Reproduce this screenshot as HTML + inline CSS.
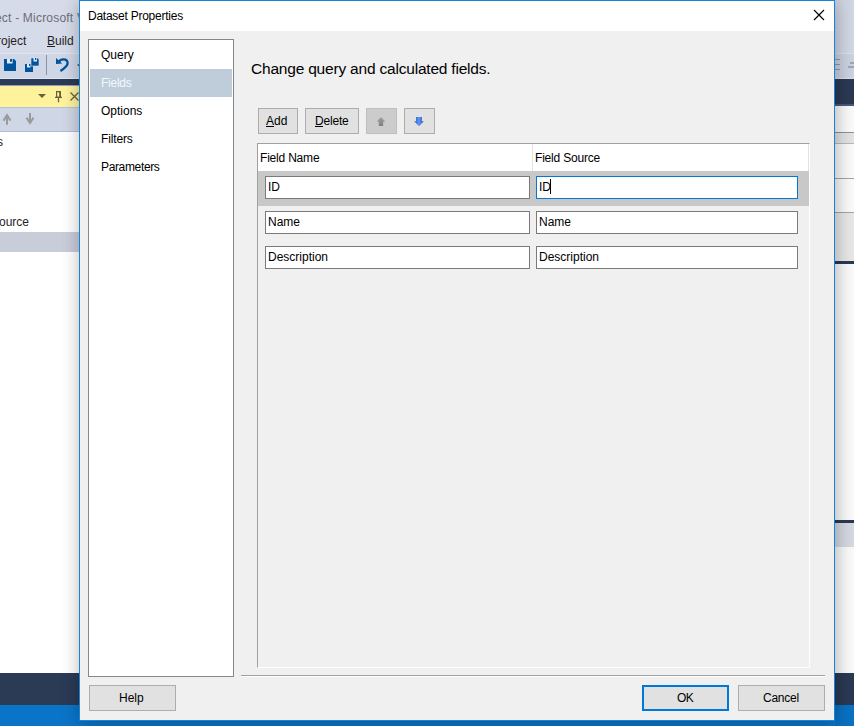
<!DOCTYPE html>
<html><head><meta charset="utf-8">
<style>
*{box-sizing:border-box;margin:0;padding:0}
html,body{width:854px;height:726px;overflow:hidden;background:#fff;font-family:"Liberation Sans",sans-serif;font-size:12px;color:#000}
div,svg{position:absolute}
.t{white-space:nowrap;line-height:12px;height:12px}
.btn{background:#e1e1e1;border:1px solid #adadad}
.tb{background:#fff;border:1px solid #7a7a7a;height:23px}
</style></head><body>
<!-- ============ IDE background ============ -->
<div style="left:0;top:0;width:854px;height:53px;background:#d6dbe9"></div>
<div style="left:0;top:53px;width:854px;height:25px;background:#cfd6e5;border-top:1px solid #e0e5f0"></div>
<div style="left:0;top:78px;width:854px;height:1px;background:#dfe4ee"></div>
<div style="left:0;top:79px;width:854px;height:6px;background:#2b3a55"></div>
<div style="left:0;top:85px;width:80px;height:1px;background:#8e9ab8"></div>
<div style="left:0;top:86px;width:80px;height:21px;background:#fff29d"></div>
<div style="left:0;top:107px;width:80px;height:1px;background:#b8c0d6"></div>
<div style="left:0;top:108px;width:80px;height:23px;background:#cfd6e5"></div>
<div style="left:0;top:131px;width:80px;height:1px;background:#b4bccf"></div>
<div style="left:0;top:232px;width:80px;height:20px;background:#c9ccd9"></div>
<div style="left:0;top:673px;width:854px;height:32px;background:#2b3a55"></div>
<div style="left:0;top:705px;width:854px;height:21px;background:#0a74c8"></div>

<!-- right strip -->
<div style="left:834px;top:79px;width:20px;height:26px;background:#2b3a55"></div>
<div style="left:834px;top:104px;width:20px;height:2px;background:#4a5a78"></div>
<div style="left:834px;top:132px;width:20px;height:1px;background:#8a96ad"></div>
<div style="left:834px;top:133px;width:20px;height:10px;background:#e8e8e8"></div>
<div style="left:834px;top:143px;width:20px;height:1px;background:#bdbdbd"></div>
<div style="left:834px;top:178px;width:20px;height:1px;background:#a8a8a8"></div>
<div style="left:834px;top:212px;width:20px;height:1px;background:#a8a8a8"></div>
<div style="left:834px;top:213px;width:20px;height:48px;background:#ececec"></div>
<div style="left:834px;top:261px;width:20px;height:3px;background:#2b3a55"></div>
<div style="left:834px;top:520px;width:20px;height:3px;background:#2b3a55"></div>
<div style="left:834px;top:523px;width:20px;height:24px;background:#d9dde6"></div>
<div style="left:835px;top:59px;width:5px;height:1px;background:#969cab"></div>
<div style="left:835px;top:64px;width:5px;height:1px;background:#969cab"></div>
<div style="left:835px;top:69px;width:5px;height:1px;background:#969cab"></div>
<div style="left:850px;top:62px;width:4px;height:2px;background:#a2a8b5"></div>
<div style="left:848px;top:66px;width:6px;height:2px;background:#a2a8b5"></div>

<!-- IDE text -->
<div class="t" style="left:-5px;top:12px;color:#6d6d78;letter-spacing:0.2px">ect - Microsoft V</div>
<div class="t" style="left:-3px;top:35px;color:#1e1e1e">roject</div>
<div class="t" style="left:47px;top:35px;color:#1e1e1e">Build</div>
<div style="left:47px;top:46px;width:8px;height:1px;background:#1e1e1e"></div>
<div class="t" style="left:-3px;top:136px;color:#1e1e1e">s</div>
<div class="t" style="left:-1px;top:216px;color:#1e1e1e">ource</div>

<!-- toolbar icons -->
<svg style="left:0;top:0" width="80" height="80" viewBox="0 0 80 80">
  <path d="M4 59H14L16 61V71H4Z" fill="#00539c"/>
  <path d="M7 59H12.6V63.5H7Z" fill="#e4e8f0"/><path d="M10 59H12V61.7H10Z" fill="#00539c"/>
  <path d="M25 64H31.5L33 65.5V72H25Z" fill="#00539c"/>
  <path d="M27 64H30.5V67.5H27Z" fill="#e4e8f0"/><path d="M29 64H30.3V66H29Z" fill="#00539c"/>
  <path d="M31 58H37.5L39 59.5V66H31Z" fill="#00539c" stroke="#d8dde8" stroke-width="0.6"/>
  <path d="M33.5 58H37V61.5H33.5Z" fill="#e4e8f0"/><path d="M35 58H36.3V60H35Z" fill="#00539c"/>
  <path d="M46.5 55V75" stroke="#8d93a3" stroke-width="1"/>
  <path d="M58.6 62.2C60.5 58.6 67.4 58.2 67.6 63.2C67.7 65.8 64 68.6 60.4 71" fill="none" stroke="#00539c" stroke-width="2.3"/>
  <path d="M56 58L56 64L62.2 63.4Z" fill="#00539c"/>
  <path d="M77 64.5h3.5l-1.75 1.8z" fill="#333"/>
</svg>
<svg style="left:0;top:85px" width="80" height="46" viewBox="0 0 80 46">
  <path d="M38 9h8l-4 4z" fill="#6e5f3c"/>
  <path d="M56.6 6.6h3.8v5.8h-3.8z" fill="none" stroke="#6e5f3c" stroke-width="1.2"/>
  <path d="M59.9 6v6.6" stroke="#6e5f3c" stroke-width="1.4"/>
  <path d="M55 12.4h7M58.5 12.4v4.8" stroke="#6e5f3c" stroke-width="1.3" fill="none"/>
  <path d="M70.5 7.5l8 8M78.5 7.5l-8 8" stroke="#6e5f3c" stroke-width="1.3"/>
  <path d="M7 39.7V30.5M3.5 35.6L7 30.2L10.5 35.6" stroke="#9a9a9a" stroke-width="2" fill="none"/>
  <path d="M30 28V38M26.5 32.6L30 38L33.5 32.6" stroke="#9a9a9a" stroke-width="2" fill="none"/>
</svg>

<div style="left:835px;top:0;width:19px;height:726px;background:linear-gradient(to right,rgba(0,0,0,0.055),rgba(0,0,0,0.025))"></div>
<!-- ============ Dialog ============ -->
<div style="left:79px;top:0;width:756px;height:721px;background:#f0f0f0;border:1px solid #1883d7;box-shadow:0 2px 16px rgba(0,0,0,0.28)"></div>
<div style="left:80px;top:1px;width:754px;height:30px;background:#fff"></div>
<div class="t" style="left:88px;top:10px;letter-spacing:-0.25px">Dataset Properties</div>
<svg style="left:813px;top:9px" width="12" height="12" viewBox="0 0 12 12"><path d="M1 1L11 11M11 1L1 11" stroke="#000" stroke-width="1.15"/></svg>

<!-- nav list -->
<div style="left:88px;top:39px;width:146px;height:638px;background:#fff;border:1px solid #828790"></div>
<div style="left:90px;top:69px;width:142px;height:28px;background:#bfcddb"></div>
<div class="t" style="left:101px;top:49px">Query</div>
<div class="t" style="left:101px;top:77px;color:#f4f7fa;letter-spacing:-0.25px">Fields</div>
<div class="t" style="left:101px;top:105px">Options</div>
<div class="t" style="left:101px;top:133px;letter-spacing:-0.15px">Filters</div>
<div class="t" style="left:101px;top:161px;letter-spacing:-0.35px">Parameters</div>

<div class="t" style="left:251px;top:61px;font-size:15.5px;line-height:16px;height:16px;letter-spacing:-0.2px">Change query and calculated fields.</div>

<!-- buttons -->
<div class="btn" style="left:258px;top:108px;width:40px;height:26px"></div>
<div class="t" style="left:266px;top:115px">Add</div>
<div style="left:266px;top:126px;width:8px;height:1px;background:#000"></div>
<div class="btn" style="left:305px;top:108px;width:54px;height:26px"></div>
<div class="t" style="left:315px;top:115px;letter-spacing:-0.2px">Delete</div>
<div style="left:315px;top:126px;width:8px;height:1px;background:#000"></div>
<div class="btn" style="left:366px;top:108px;width:31px;height:26px;background:#cccccc;border-color:#bfbfbf"></div>
<div class="btn" style="left:404px;top:108px;width:31px;height:26px"></div>
<svg style="left:366px;top:108px" width="31" height="26" viewBox="0 0 31 26">
  <defs><linearGradient id="ug" x1="0" y1="0" x2="0" y2="1"><stop offset="0" stop-color="#a0a0a0"/><stop offset="1" stop-color="#808080"/></linearGradient></defs>
  <path d="M15 9L19.2 13.5H17.2V18H12.8V13.5H10.8Z" fill="url(#ug)"/>
</svg>
<svg style="left:404px;top:108px" width="31" height="26" viewBox="0 0 31 26">
  <defs><linearGradient id="dg" x1="0" y1="0" x2="1" y2="0"><stop offset="0" stop-color="#2455c8"/><stop offset="0.5" stop-color="#6196ee"/><stop offset="1" stop-color="#2455c8"/></linearGradient></defs>
  <path d="M12 9H18V13.3H19.8L15 18.2L10.2 13.3H12Z" fill="url(#dg)"/>
</svg>

<!-- grid -->
<div style="left:257px;top:143px;width:553px;height:525px;background:#f0f0f0;border:1px solid #a0a0a0;border-right-color:#fff;border-bottom-color:#fff"></div>
<div style="left:258px;top:144px;width:551px;height:27px;background:#fff"></div>
<div style="left:532px;top:144px;width:1px;height:27px;background:#e3e3e3"></div>
<div style="left:808px;top:144px;width:1px;height:27px;background:#e3e3e3"></div>
<div class="t" style="left:260px;top:152px;letter-spacing:-0.2px">Field Name</div>
<div class="t" style="left:535px;top:152px;letter-spacing:-0.2px">Field Source</div>
<div style="left:258px;top:171px;width:551px;height:35px;background:#c8c8c8"></div>

<div class="tb" style="left:265px;top:176px;width:265px"></div>
<div class="tb" style="left:536px;top:176px;width:262px;border-color:#0078d7"></div>
<div class="tb" style="left:265px;top:211px;width:265px"></div>
<div class="tb" style="left:536px;top:211px;width:262px"></div>
<div class="tb" style="left:265px;top:246px;width:265px"></div>
<div class="tb" style="left:536px;top:246px;width:262px"></div>
<div class="t" style="left:268px;top:181px">ID</div>
<div class="t" style="left:539px;top:181px">ID</div>
<div style="left:550px;top:179px;width:1px;height:15px;background:#000"></div>
<div class="t" style="left:268px;top:216px">Name</div>
<div class="t" style="left:539px;top:216px">Name</div>
<div class="t" style="left:268px;top:251px">Description</div>
<div class="t" style="left:539px;top:251px">Description</div>

<!-- separator + bottom buttons -->
<div style="left:241px;top:675px;width:584px;height:1px;background:#a0a0a0"></div>
<div style="left:241px;top:676px;width:584px;height:1px;background:#fff"></div>
<div class="btn" style="left:89px;top:685px;width:87px;height:26px"></div>
<div class="t" style="left:119px;top:692px">Help</div>
<div class="btn" style="left:642px;top:685px;width:87px;height:26px;border:2px solid #0078d7"></div>
<div class="t" style="left:677px;top:692px;letter-spacing:-0.5px">OK</div>
<div class="btn" style="left:738px;top:685px;width:87px;height:26px"></div>
<div class="t" style="left:763px;top:692px;letter-spacing:-0.25px">Cancel</div>
</body></html>
